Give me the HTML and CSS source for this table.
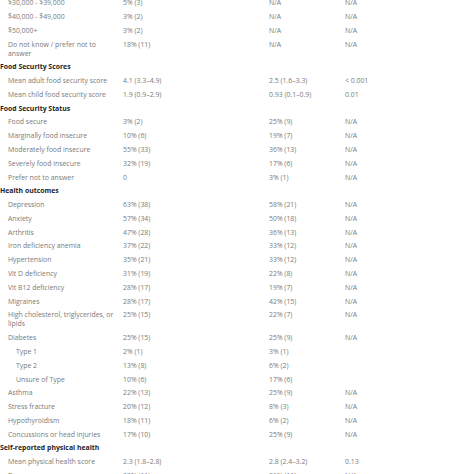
FILE: index.html
```html
<!DOCTYPE html>
<html>
<head>
<meta charset="utf-8">
<link rel="stylesheet" href="styles.css">
</head>
<body>
<table class="data">
<colgroup><col class="c1"><col class="c2"><col class="c3"><col class="c4"></colgroup>
<tbody>
<tr><td class="l1">$30,000 - $39,000</td><td>5% (3)</td><td>N/A</td><td>N/A</td></tr>
<tr><td class="l1">$40,000 - $49,000</td><td>3% (2)</td><td>N/A</td><td>N/A</td></tr>
<tr><td class="l1">$50,000+</td><td>3% (2)</td><td>N/A</td><td>N/A</td></tr>
<tr><td class="l1">Do not know / prefer not to answer</td><td>18% (11)</td><td>N/A</td><td>N/A</td></tr>
<tr class="sec"><td colspan="4">Food Security Scores</td></tr>
<tr><td class="l1">Mean adult food security score</td><td>4.1 (3.3–4.9)</td><td>2.5 (1.6–3.3)</td><td>&lt; 0.001</td></tr>
<tr><td class="l1">Mean child food security score</td><td>1.9 (0.9–2.9)</td><td>0.93 (0.1–0.9)</td><td>0.01</td></tr>
<tr class="sec"><td colspan="4">Food Security Status</td></tr>
<tr><td class="l1">Food secure</td><td>3% (2)</td><td>25% (9)</td><td>N/A</td></tr>
<tr><td class="l1">Marginally food insecure</td><td>10% (6)</td><td>19% (7)</td><td>N/A</td></tr>
<tr><td class="l1">Moderately food insecure</td><td>55% (33)</td><td>36% (13)</td><td>N/A</td></tr>
<tr><td class="l1">Severely food insecure</td><td>32% (19)</td><td>17% (6)</td><td>N/A</td></tr>
<tr><td class="l1">Prefer not to answer</td><td>0</td><td>3% (1)</td><td>N/A</td></tr>
<tr class="sec"><td colspan="4">Health outcomes</td></tr>
<tr><td class="l1">Depression</td><td>63% (38)</td><td>58% (21)</td><td>N/A</td></tr>
<tr><td class="l1">Anxiety</td><td>57% (34)</td><td>50% (18)</td><td>N/A</td></tr>
<tr><td class="l1">Arthritis</td><td>47% (28)</td><td>36% (13)</td><td>N/A</td></tr>
<tr><td class="l1">Iron deficiency anemia</td><td>37% (22)</td><td>33% (12)</td><td>N/A</td></tr>
<tr><td class="l1">Hypertension</td><td>35% (21)</td><td>33% (12)</td><td>N/A</td></tr>
<tr><td class="l1">Vit D deficiency</td><td>31% (19)</td><td>22% (8)</td><td>N/A</td></tr>
<tr><td class="l1">Vit B12 deficiency</td><td>28% (17)</td><td>19% (7)</td><td>N/A</td></tr>
<tr><td class="l1">Migraines</td><td>28% (17)</td><td>42% (15)</td><td>N/A</td></tr>
<tr><td class="l1">High cholesterol, triglycerides, or lipids</td><td>25% (15)</td><td>22% (7)</td><td>N/A</td></tr>
<tr><td class="l1">Diabetes</td><td>25% (15)</td><td>25% (9)</td><td>N/A</td></tr>
<tr><td class="l2">Type 1</td><td>2% (1)</td><td>3% (1)</td><td></td></tr>
<tr><td class="l2">Type 2</td><td>13% (8)</td><td>6% (2)</td><td></td></tr>
<tr><td class="l2">Unsure of Type</td><td>10% (6)</td><td>17% (6)</td><td></td></tr>
<tr><td class="l1">Asthma</td><td>22% (13)</td><td>25% (9)</td><td>N/A</td></tr>
<tr><td class="l1">Stress fracture</td><td>20% (12)</td><td>8% (3)</td><td>N/A</td></tr>
<tr><td class="l1">Hypothyroidism</td><td>18% (11)</td><td>6% (2)</td><td>N/A</td></tr>
<tr><td class="l1">Concussions or head injuries</td><td>17% (10)</td><td>25% (9)</td><td>N/A</td></tr>
<tr class="sec"><td colspan="4">Self-reported physical health</td></tr>
<tr><td class="l1">Mean physical health score</td><td>2.3 (1.8–2.8)</td><td>2.8 (2.4–3.2)</td><td>0.13</td></tr>
<tr><td class="l1">Poor</td><td>33% (11)</td><td>31% (11)</td><td>N/A</td></tr>
</tbody>
</table>
</body>
</html>
```

FILE: styles.css
```css
html, body {
  margin: 0;
  padding: 0;
  background: #ffffff;
}
body {
  overflow: hidden;
  height: 474px;
}
.data {
  border-collapse: collapse;
  table-layout: fixed;
  width: 474px;
  margin-top: -4.2px;
  font-family: "Open Sans", "Noto Sans", sans-serif;
  font-size: 6.9px;
  line-height: 9px;
  color: #7a7a7a;
}
.c1 { width: 123px; }
.c2 { width: 146px; }
.c3 { width: 76px; }
.c4 { width: 129px; }
.data td {
  padding: 2.4px 0;
  vertical-align: top;
  text-align: left;
}
.data td.l1 { padding-left: 8px; padding-right: 3px; }
.data td.l2 { padding-left: 16px; }
.sec td {
  font-weight: 700;
  color: #1e1e1e;
}
```
